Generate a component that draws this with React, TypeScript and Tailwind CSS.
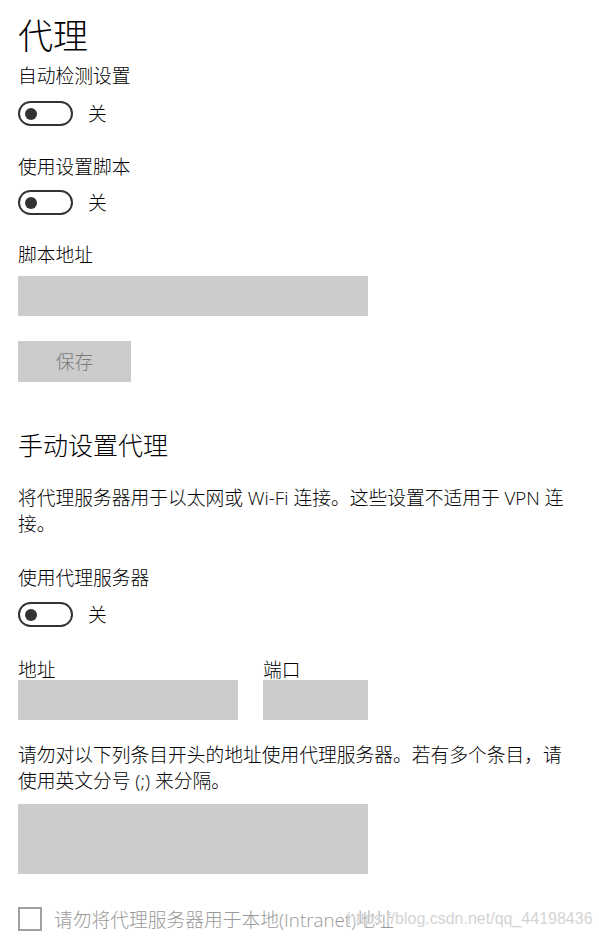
import React from "react";

const font = { fontFamily: '"Open Sans", "Noto Sans CJK SC", sans-serif' };

function Toggle({ className = "" }: { className?: string }) {
  return (
    <div className={`flex items-center ${className}`}>
      <div className="box-border flex h-[25px] w-[55px] items-center rounded-full border-2 border-[#333333] pl-[5px]">
        <div className="h-[12px] w-[12px] rounded-full bg-[#333333]" />
      </div>
      <span className="ml-[15px] text-[18.75px] leading-[19px] text-black">关</span>
    </div>
  );
}

function Label({ children, className = "" }: { children: React.ReactNode; className?: string }) {
  return <div className={`text-[18.75px] leading-[19px] text-black ${className}`}>{children}</div>;
}

export default function App() {
  return (
    <div className="relative min-h-[943px] w-[599px] bg-white pl-[18px] pt-[18px] font-light" style={font}>
      <h1 className="text-[35px] font-light leading-[35px] text-black">代理</h1>

      <Label className="mt-[13px]">自动检测设置</Label>
      <Toggle className="mt-[16px]" />

      <Label className="mt-[31px]">使用设置脚本</Label>
      <Toggle className="mt-[14px]" />

      <Label className="mt-[30px]">脚本地址</Label>
      <div className="mt-[12px] h-[40px] w-[350px] bg-[#cccccc]" />

      <div className="mt-[25px] flex h-[41px] w-[113px] items-center justify-center bg-[#cccccc] text-[18.75px] leading-[19px] text-[#7a7a7a]">
        保存
      </div>

      <h2 className="mt-[51px] text-[25px] font-light leading-[25px] text-black">手动设置代理</h2>

      <p className="mt-[27px] w-[555px] text-[18.75px] leading-[26px] text-black">
        将代理服务器用于以太网或 Wi-Fi 连接。这些设置不适用于 VPN 连接。
      </p>

      <Label className="mt-[31px]">使用代理服务器</Label>
      <Toggle className="mt-[15px]" />

      <div className="mt-[33px] flex gap-[25px]">
        <div className="flex flex-col">
          <Label>地址</Label>
          <div className="mt-[1px] h-[40px] w-[220px] bg-[#cccccc]" />
        </div>
        <div className="flex flex-col">
          <Label>端口</Label>
          <div className="mt-[1px] h-[40px] w-[105px] bg-[#cccccc]" />
        </div>
      </div>

      <p className="mt-[22px] w-[555px] text-[18.75px] leading-[26px] text-black">
        请勿对以下列条目开头的地址使用代理服务器。若有多个条目，请使用英文分号 (;) 来分隔。
      </p>
      <div className="mt-[10px] h-[70px] w-[350px] bg-[#cccccc]" />

      <div className="mt-[33px] flex items-center">
        <div className="box-border h-[24px] w-[24px] border-2 border-[#a0a0a0] bg-white" />
        <span className="ml-[12px] text-[18.75px] leading-[19px] text-[#999999]">
          请勿将代理服务器用于本地(Intranet)地址
        </span>
      </div>

      <div
        className="absolute left-[347px] top-[909px] text-[16px] font-normal leading-[20px] text-[#d4d4d4]"
        style={{ fontFamily: '"Liberation Sans", Arial, sans-serif', textShadow: "0 0 1px rgba(255,255,255,0.9)" }}
      >
        https://blog.csdn.net/qq_44198436
      </div>
    </div>
  );
}
